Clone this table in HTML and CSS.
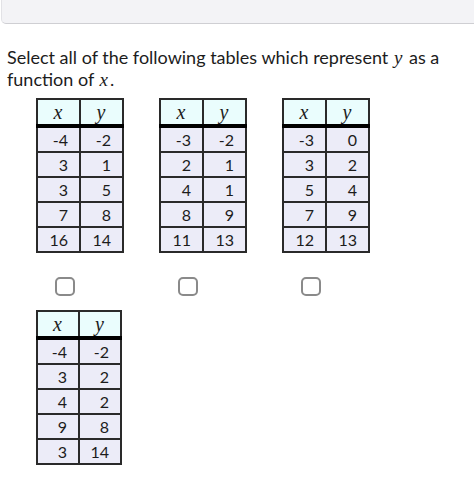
FILE: index.html
```html
<!DOCTYPE html>
<html>
<head>
<meta charset="utf-8">
<link rel="stylesheet" href="styles.css">
</head>
<body>
<div class="topbar"></div>
<p class="question">Select all of the following tables which represent <span class="math">y</span> as a function of <span class="math">x</span>.</p>
<div class="choices">
  <div class="choice">
    <table class="fn">
      <thead><tr><th><span class="math">x</span></th><th><span class="math">y</span></th></tr></thead>
      <tbody>
        <tr><td>-4</td><td>-2</td></tr>
        <tr><td>3</td><td>1</td></tr>
        <tr><td>3</td><td>5</td></tr>
        <tr><td>7</td><td>8</td></tr>
        <tr><td>16</td><td>14</td></tr>
      </tbody>
    </table>
    <span class="box"></span>
  </div>
  <div class="choice">
    <table class="fn">
      <thead><tr><th><span class="math">x</span></th><th><span class="math">y</span></th></tr></thead>
      <tbody>
        <tr><td>-3</td><td>-2</td></tr>
        <tr><td>2</td><td>1</td></tr>
        <tr><td>4</td><td>1</td></tr>
        <tr><td>8</td><td>9</td></tr>
        <tr><td>11</td><td>13</td></tr>
      </tbody>
    </table>
    <span class="box"></span>
  </div>
  <div class="choice">
    <table class="fn">
      <thead><tr><th><span class="math">x</span></th><th><span class="math">y</span></th></tr></thead>
      <tbody>
        <tr><td>-3</td><td>0</td></tr>
        <tr><td>3</td><td>2</td></tr>
        <tr><td>5</td><td>4</td></tr>
        <tr><td>7</td><td>9</td></tr>
        <tr><td>12</td><td>13</td></tr>
      </tbody>
    </table>
    <span class="box"></span>
  </div>
  <div class="choice">
    <table class="fn narrow">
      <thead><tr><th><span class="math">x</span></th><th><span class="math">y</span></th></tr></thead>
      <tbody>
        <tr><td>-4</td><td>-2</td></tr>
        <tr><td>3</td><td>2</td></tr>
        <tr><td>4</td><td>2</td></tr>
        <tr><td>9</td><td>8</td></tr>
        <tr><td>3</td><td>14</td></tr>
      </tbody>
    </table>
  </div>
</div>
</body>
</html>
```

FILE: styles.css
```css
html, body {
  margin: 0;
  padding: 0;
  background: #ffffff;
}
body {
  font-family: Lato, "Open Sans", sans-serif;
  color: #1c1c1c;
}
.topbar {
  height: 23px;
  margin-left: 1px;
  background: #f3f3f6;
  border-bottom: 1px solid #cfcfd3;
  border-left: 1px solid #e2e2e6;
  border-bottom-left-radius: 5px;
}
.question {
  margin: 22px 0 0 7px;
  font-size: 18px;
  line-height: 22px;
  width: 460px;
}
.math {
  display: inline-block;
  font-family: "Liberation Serif", "DejaVu Serif", serif;
  font-style: italic;
  font-size: 19px;
  line-height: 1;
  padding: 0 2px 0 1px;
}
.choices {
  display: grid;
  grid-template-columns: repeat(3, 123px);
  padding-left: 14px;
  margin-top: 8px;
  row-gap: 14px;
}
.choice {
  display: flex;
  flex-direction: column;
  align-items: flex-start;
}
.fn {
  margin-left: 22px;
  border-collapse: collapse;
  font-size: 16px;
}
.fn th, .fn td {
  border: 2px solid #2a2a2a;
  padding: 0;
}
.fn th {
  width: 41px;
  height: 24px;
  background: #eafdfd;
  text-align: center;
  font-weight: normal;
  border-bottom: 4px solid #000;
}
.fn th .math {
  font-size: 20px;
}
.fn td {
  width: 30px;
  height: 23px;
  background: #ececf8;
  text-align: right;
  padding-right: 11px;
}
.fn.narrow th {
  width: 40px;
}
.fn.narrow td {
  width: 29px;
}
.box {
  display: block;
  width: 16px;
  height: 15px;
  margin: 24px 0 0 41px;
  border: 2px solid #8a8a8a;
  border-radius: 5px;
}
```
